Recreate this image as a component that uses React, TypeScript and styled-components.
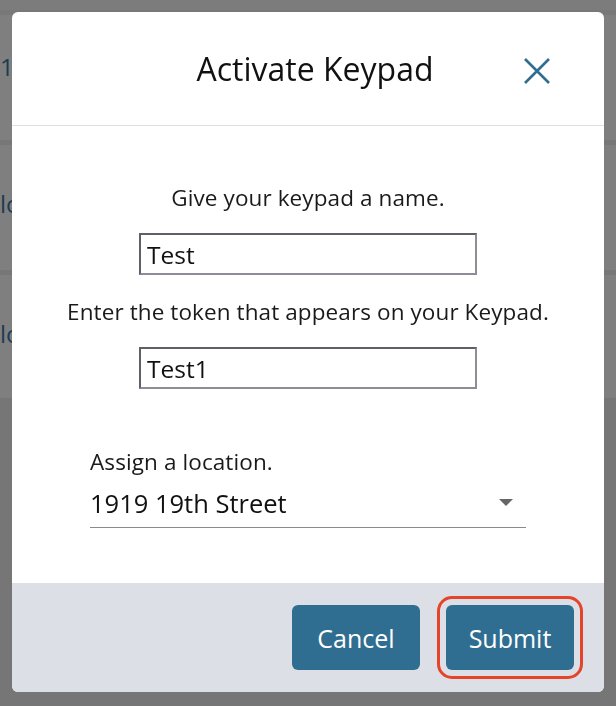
import React from "react";
import styled, { createGlobalStyle } from "styled-components";

const Global = createGlobalStyle`
  html, body { margin: 0; padding: 0; }
  body {
    font-family: "Open Sans", Lato, "Noto Sans", sans-serif;
    background: #ececec;
    overflow: hidden;
  }
  * { box-sizing: border-box; }
`;

const Page = styled.div`
  width: 100%;
  height: 100vh;
  background: #ececec;
  display: flex;
  flex-direction: column;
`;

const TopBar = styled.div`
  height: 15px;
  background: #f8f8f8;
  border-bottom: 5px solid #f0f0f0;
`;

const BgRow = styled.div<{ $pad: number }>`
  height: 130px;
  background: #ffffff;
  border-bottom: 5px solid #eeeeee;
  padding-top: ${(p) => p.$pad}px;
  font-size: 24px;
  line-height: 32px;
  color: #3b79a3;
  white-space: nowrap;
  &:last-child { height: 123px; border-bottom: none; }
`;

const Overlay = styled.div`
  position: fixed;
  inset: 0;
  background: rgba(0, 0, 0, 0.5);
  padding: 12px;
  display: flex;
  align-items: flex-start;
  justify-content: center;
`;

const Modal = styled.div`
  width: 592px;
  height: 680px;
  background: #ffffff;
  border-radius: 6px;
  overflow: hidden;
  display: flex;
  flex-direction: column;
`;

const Header = styled.div`
  height: 114px;
  border-bottom: 1px solid #e0e0e0;
  display: flex;
  align-items: center;
  justify-content: center;
  position: relative;
  padding-left: 14px;
`;

const Title = styled.h2`
  margin: 0;
  font-size: 32px;
  line-height: 40px;
  font-weight: 400;
  color: #111;
`;

const CloseButton = styled.button`
  position: absolute;
  right: 52px;
  top: 44px;
  width: 30px;
  height: 30px;
  padding: 0;
  border: none;
  background: transparent;
  display: flex;
  align-items: center;
  justify-content: center;
`;

const Body = styled.div`
  flex: 1;
  display: flex;
  flex-direction: column;
  align-items: center;
  padding-top: 58px;
`;

const Field = styled.div<{ $mb: number }>`
  display: flex;
  flex-direction: column;
  align-items: center;
  gap: 21px;
  margin-bottom: ${(p) => p.$mb}px;
`;

const Label = styled.label`
  font-size: 22.5px;
  letter-spacing: 0.1px;
  line-height: 28px;
  color: #1a1a1a;
`;

const TextInput = styled.input`
  width: 338px;
  height: 42px;
  border: 2px solid;
  border-color: #5f5f68 #8c8c9b #8c8c9b #5f5f68;
  padding: 0 6px;
  font-family: inherit;
  font-size: 24.5px;
  color: #111;
  outline: none;
`;

const Location = styled.div`
  width: 436px;
  display: flex;
  flex-direction: column;
`;

const LocationLabel = styled.div`
  font-size: 22.5px;
  letter-spacing: 0.1px;
  line-height: 28px;
  color: #1a1a1a;
  margin-bottom: 6px;
`;

const Select = styled.div`
  height: 46px;
  border-bottom: 1px solid #8a8a8a;
  display: flex;
  align-items: center;
  justify-content: space-between;
  padding: 0 13px 4px 0;
  font-size: 25.5px;
  color: #111;
`;

const Footer = styled.div`
  height: 109px;
  background: #dcdfe6;
  display: flex;
  align-items: center;
  justify-content: flex-end;
  gap: 26px;
  padding-right: 30px;
`;

const Button = styled.button<{ $focused?: boolean }>`
  width: 128px;
  height: 65px;
  border: none;
  border-radius: 6px;
  background: #2f6e91;
  color: #fff;
  font-family: inherit;
  font-size: 25px;
  cursor: pointer;
  outline: ${(p) => (p.$focused ? "3px solid #e5432a" : "none")};
  outline-offset: 6px;
`;

export default function App() {
  return (
    <>
      <Global />
      <Page>
        <TopBar />
        <BgRow $pad={36}>1919 19th Street</BgRow>
        <BgRow $pad={43}>location</BgRow>
        <BgRow $pad={43}>location</BgRow>
      </Page>
      <Overlay>
        <Modal role="dialog" aria-labelledby="title">
          <Header>
            <Title id="title">Activate Keypad</Title>
            <CloseButton aria-label="Close">
              <svg width="28" height="28" viewBox="0 0 28 28">
                <path d="M2 2 L26 26 M26 2 L2 26" stroke="#2f6e91" strokeWidth="2.6" fill="none" />
              </svg>
            </CloseButton>
          </Header>
          <Body>
            <Field $mb={23}>
              <Label>Give your keypad a name.</Label>
              <TextInput defaultValue="Test" />
            </Field>
            <Field $mb={59}>
              <Label>Enter the token that appears on your Keypad.</Label>
              <TextInput defaultValue="Test1" />
            </Field>
            <Location>
              <LocationLabel>Assign a location.</LocationLabel>
              <Select>
                <span>1919 19th Street</span>
                <svg width="14" height="8" viewBox="0 0 14 8">
                  <path d="M0 0 L14 0 L7 7 Z" fill="#666" />
                </svg>
              </Select>
            </Location>
          </Body>
          <Footer>
            <Button>Cancel</Button>
            <Button $focused>Submit</Button>
          </Footer>
        </Modal>
      </Overlay>
    </>
  );
}
